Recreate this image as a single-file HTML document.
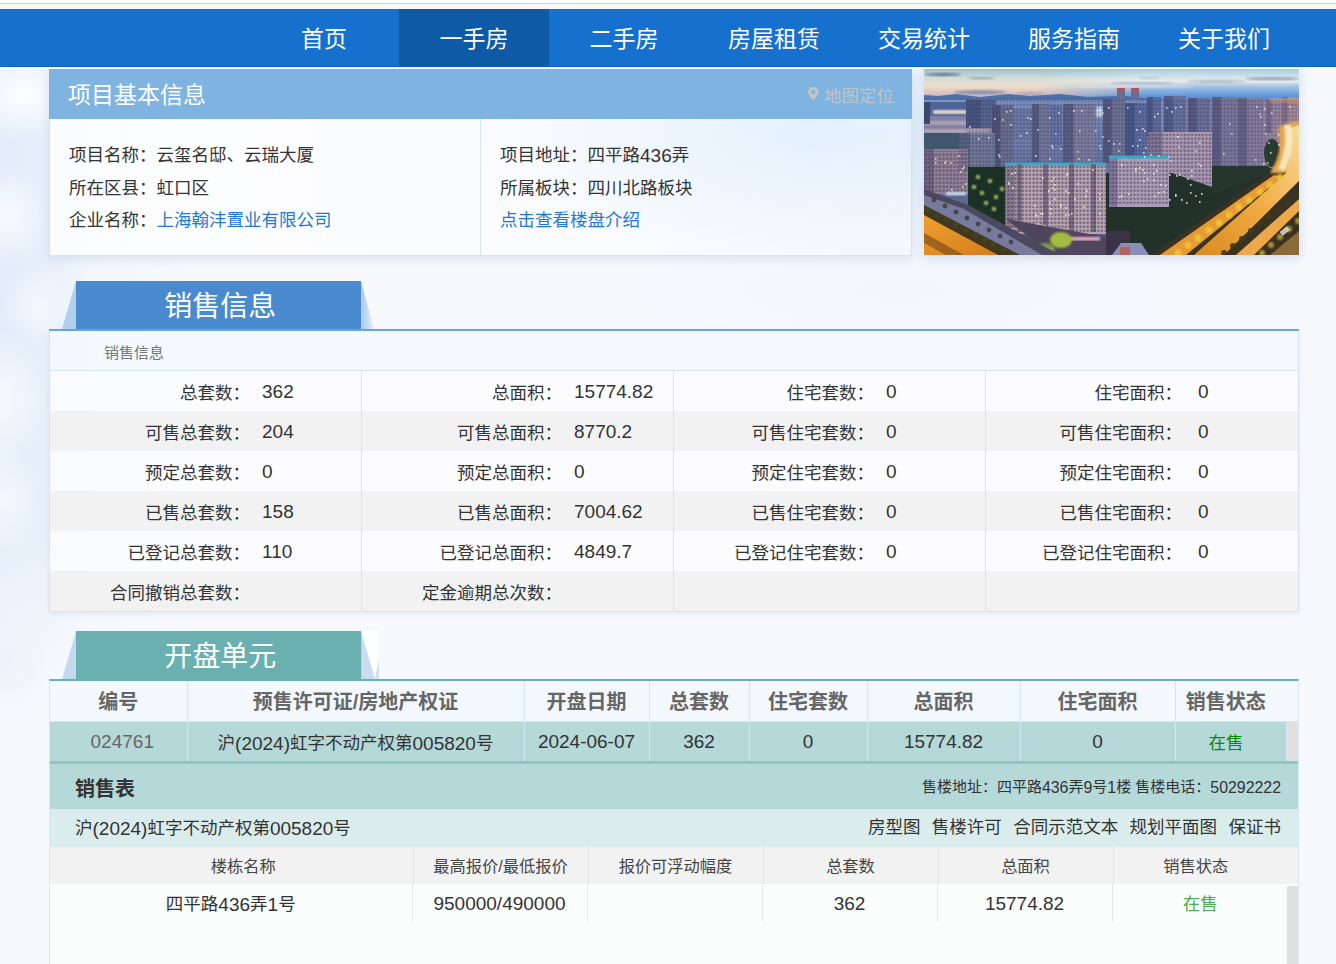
<!DOCTYPE html>
<html lang="zh-CN">
<head>
<meta charset="utf-8">
<title>项目基本信息</title>
<style>
*{box-sizing:border-box;margin:0;padding:0}
html,body{width:1336px;height:964px;overflow:hidden}
body{position:relative;font-family:"Liberation Sans","Noto Sans CJK SC",sans-serif;color:#333;font-size:17.5px;
background:#f7f9fd;}
a{text-decoration:none;color:inherit}
#bg{position:absolute;left:0;top:0;width:1336px;height:964px;z-index:0;
background:
 radial-gradient(ellipse 60px 45px at 22px 95px,rgba(255,255,255,.95),rgba(255,255,255,0) 100%),
 radial-gradient(ellipse 45px 60px at 5px 660px,rgba(236,242,250,.9),rgba(236,242,250,0) 100%),
 radial-gradient(ellipse 50px 70px at 0px 400px,rgba(248,251,254,.9),rgba(248,251,254,0) 100%),
 radial-gradient(ellipse 330px 120px at 800px 135px,rgba(219,236,251,1),rgba(219,236,251,0) 100%),
 radial-gradient(ellipse 260px 60px at 900px 290px,rgba(238,245,252,.7),rgba(238,245,252,0) 100%),
 linear-gradient(180deg,rgba(247,249,253,0) 0,rgba(247,249,253,0) 520px,rgba(247,249,253,1) 700px),
 radial-gradient(ellipse 40px 50px at 8px 215px,rgba(250,252,255,.9),rgba(250,252,255,0) 100%),
 radial-gradient(ellipse 35px 40px at 38px 305px,rgba(247,250,254,.8),rgba(247,250,254,0) 100%),
 radial-gradient(ellipse 40px 60px at 4px 500px,rgba(247,250,254,.8),rgba(247,250,254,0) 100%),
 linear-gradient(90deg,#e2edf9 0,#e5effa 40px,rgba(240,246,252,.7) 90px,rgba(247,249,253,0) 190px),
 #f7f9fd;}
#topstrip{position:absolute;left:0;top:0;width:1336px;height:9px;background:#f8f8f8;border-top:3px solid #fff;z-index:2}
#topstrip i{position:absolute;left:0;top:0;width:100%;height:1px;background:#cfcfcf}
#nav{position:absolute;left:0;top:9px;width:1336px;height:58px;background:#1670cd;border-bottom:1px solid #0a64c2;z-index:2}
#navline{position:absolute;left:0;top:67px;width:1336px;height:2px;background:#fdfeff;z-index:2}
#nav ul{position:absolute;left:249px;top:0;list-style:none;height:57px}
#nav li{float:left;width:150px;height:57px;line-height:61px;text-align:center;color:#fff;font-size:23px}
#nav li.on{background:#0f5aa6}
.abs{position:absolute;z-index:1}

#info{left:49px;top:69px;width:863px;height:187px;box-shadow:0 3px 10px rgba(120,150,190,.22)}
#info .hd{height:50px;background:#7fb3e0;color:#fff;font-size:23px;line-height:53px;padding-left:19px;position:relative}
#info .hd .map{position:absolute;right:18px;top:0;font-size:17.5px;color:#c3c3c3;line-height:54px}
#info .hd .map svg{position:absolute;left:-16px;top:17.5px}
#info .bd{height:137px;border:1px solid #d3e6f6;border-top:0;background:linear-gradient(90deg,rgba(255,255,255,.75) 0,rgba(255,255,255,.55) 45%,rgba(240,247,254,.25) 100%);position:relative}
#info .bd .c1,#info .bd .c2{position:absolute;top:0;height:136px;padding-top:20px;line-height:32.5px;font-size:17.5px;white-space:nowrap}
#info .bd .c1{left:0;width:431px;padding-left:19px;border-right:1px solid #d3e6f6}
#info .bd .c2{left:431px;padding-left:19px}
#info a{color:#1e7ad2}

.tab{position:absolute;z-index:1;left:62px;width:312px;height:48px}
.tab b{position:absolute;left:14px;top:0;width:284.5px;height:48px;line-height:51px;text-align:center;color:#fff;font-size:28px;font-weight:normal;padding-left:4px}
.tab svg{position:absolute;left:0;top:0}
#tab1{top:281px}
#tab1 b{background:#4a8bd0}
#tab2{top:631px;width:318px}
#tab2 b{background:#6ab0b1}
#sales{left:49px;top:329px;width:1250px;height:283px;border-top:2px solid #68a6da;box-shadow:0 2px 6px rgba(140,160,190,.15)}
#sales .sub{height:40px;line-height:43px;padding-left:54px;font-size:15px;color:#777;background:rgba(243,248,253,.9);border:1px solid #d3e6f6;border-top:0}
#sales table{border-collapse:separate;border-spacing:0;table-layout:fixed;width:1250px;position:relative}
#sales td{height:40px;font-size:17.5px;vertical-align:middle;white-space:nowrap;padding:0}
#sales tr:nth-child(odd) td{background:rgba(252,253,255,.8)}
#sales tr:nth-child(even) td{background:#f2f2f2}
#sales td.l{text-align:right}
#sales td.l4{padding-right:4px}
#sales td.v{text-align:left;padding-left:12px;border-right:1px solid #d3e6f6}
#sales td.v.last{border-right:0}
#sales .frame{position:absolute;left:0;top:40px;width:1250px;height:241px;border:1px solid #d3e6f6;border-top:0;pointer-events:none}

#units{left:49px;top:679px;width:1250px;height:285px;border-top:2px solid #6ab0b1;border-left:1px solid #d3e6f6;border-right:1px solid #d3e6f6;background:rgba(251,253,253,.9);overflow:hidden}
#units table{border-collapse:collapse;table-layout:fixed}
#t1{width:1248px}
#t1 th{height:40px;font-size:20px;font-weight:bold;color:#666;background:#f3f8fd;border-right:1px solid #d3e6f6;border-bottom:1px solid #d3e6f6;padding:0;text-align:center}
#t1 th:last-child{border-right:0}
#t1 td{height:40px;font-size:17.5px;background:#b5d8d9;border-right:1px solid #d3e6f6;padding:0;text-align:center}
#t1 td.no{color:#666;padding-left:8px}
#t1 td.g{color:#0a8a0a}
#t1 td.sb{background:#e0e0e0;border-right:0}
#units .ln{height:3px;background:#8ec5c6}
#units .r1{height:45px;background:#b5d8d9;position:relative;line-height:45px}
#units .r1 b{position:absolute;left:25px;top:3px;font-size:20px;color:#333}
#units .r1>span{position:absolute;right:17px;font-size:15px;color:#333}
#units .r2{height:37.5px;background:#dbecec;position:relative;line-height:37px;font-size:17.5px}
#units .r2 i{position:absolute;left:25px;font-style:normal}
#units .r2>span{position:absolute;right:17px;word-spacing:0}
#units .r2>span a{margin-left:11.4px}
#t2{width:1248px}
#t2 th{height:37.5px;font-size:16.25px;font-weight:normal;color:#444;background:#f2f2f2;border-right:1px solid #e2e2e2;padding:0;text-align:center}
#t2 th:last-child{border-right:0}
#t3{width:1238px}
#t3 td{height:37.5px;font-size:17.5px;border-right:1px solid #e6e6e6;padding:0;text-align:center}
#t3 td:last-child{border-right:0}
#t3 td.g{color:#4caf50}
#units .vs{position:absolute;right:0;top:205px;width:11px;height:80px;background:#e0e0e0}
.d{font-size:19px;position:relative;top:1px}
.r1 .d{font-size:15.9px;top:0.5px}
#t1 th.st{padding-right:22px}
#t1 td.g{padding-right:9px}
#t2 th.st{padding-right:20px}
#t2 th.nm{padding-left:24px}
#photo{box-shadow:0 3px 12px rgba(110,140,185,.28)}
</style>
</head>
<body>
<div id="bg"></div>
<div id="topstrip"><i></i></div>
<div id="nav">
 <ul>
  <li>首页</li><li class="on">一手房</li><li>二手房</li><li>房屋租赁</li><li>交易统计</li><li>服务指南</li><li>关于我们</li>
 </ul>
</div>
<div id="navline"></div>

<div id="info" class="abs">
 <div class="hd">项目基本信息<span class="map"><svg width="10.5" height="13.5" viewBox="0 0 11 14"><path d="M5.5 0C2.5 0 0 2.4 0 5.3c0 1.2.5 2.4 1.200 3.400L5.500 14l4.300-5.300c.7-1 1.200-2.200 1.200-3.400C11 2.400 8.500 0 5.500 0zm0 7.400a2.100 2.100 0 1 1 0-4.200 2.100 2.100 0 0 1 0 4.200z" fill="#c3c3c3"/></svg>地图定位</span></div>
 <div class="bd">
  <div class="c1"><p>项目名称：云玺名邸、云瑞大厦</p><p>所在区县：虹口区</p><p>企业名称：<a>上海翰沣置业有限公司</a></p></div>
  <div class="c2"><p>项目地址：四平路<span class="d">436</span>弄</p><p>所属板块：四川北路板块</p><p><a>点击查看楼盘介绍</a></p></div>
 </div>
</div>

<!-- PHOTO-START -->
<svg id="photo" class="abs" width="375" height="186" viewBox="0 0 375 186" style="left:924px;top:69px">
<defs>
<linearGradient id="skyL" x1="0" y1="0" x2="0" y2="1"><stop offset="0" stop-color="#93b7c6"/><stop offset=".28" stop-color="#cfdcd9"/><stop offset=".5" stop-color="#eee0cd"/><stop offset=".7" stop-color="#d9c0bd"/><stop offset=".86" stop-color="#a9a6c8"/><stop offset="1" stop-color="#7f9fd4"/></linearGradient>
<linearGradient id="skyR" x1="0" y1="0" x2="0" y2="1"><stop offset="0" stop-color="#98c6dc"/><stop offset=".22" stop-color="#c9dfe8"/><stop offset=".38" stop-color="#ebebe8"/><stop offset=".5" stop-color="#a9c5e5"/><stop offset=".78" stop-color="#5b93d9"/><stop offset="1" stop-color="#5b93d9"/></linearGradient>
<linearGradient id="fadeR" x1="0" y1="0" x2="1" y2="0"><stop offset=".3" stop-color="#fff" stop-opacity="0"/><stop offset=".6" stop-color="#fff" stop-opacity="1"/></linearGradient>
<mask id="mR"><rect width="375" height="40" fill="url(#fadeR)"/></mask>
<linearGradient id="city" x1="0" y1="0" x2="0" y2="1"><stop offset="0" stop-color="#7f93c4"/><stop offset=".5" stop-color="#66709c"/><stop offset="1" stop-color="#4c5274"/></linearGradient>
<linearGradient id="warm" x1="0" y1="0" x2="1" y2="0"><stop offset=".55" stop-color="#b08aa0" stop-opacity="0"/><stop offset="1" stop-color="#c08a90" stop-opacity=".55"/></linearGradient>
<linearGradient id="road" x1="0" y1="1" x2="1" y2="0"><stop offset="0" stop-color="#d98a22"/><stop offset=".5" stop-color="#f0ab42"/><stop offset="1" stop-color="#f8dca0"/></linearGradient>
<linearGradient id="roadL" x1="0" y1="0" x2="1" y2="1"><stop offset="0" stop-color="#f0a030"/><stop offset="1" stop-color="#d47c1c"/></linearGradient>
<pattern id="pw1" width="3.4" height="3.8" patternUnits="userSpaceOnUse"><rect x=".4" y=".5" width="2" height="2.200" fill="#2d3356"/></pattern>
<pattern id="pw2" width="3.6" height="4" patternUnits="userSpaceOnUse"><rect x=".5" y=".6" width="2.200" height="2.300" fill="#443650"/></pattern>
<filter id="b1" x="-10%" y="-10%" width="120%" height="120%"><feGaussianBlur stdDeviation="0.8"/></filter>
<filter id="b2" x="-20%" y="-20%" width="140%" height="140%"><feGaussianBlur stdDeviation="2.500"/></filter>
<filter id="b0" x="0" y="0" width="100%" height="100%"><feGaussianBlur stdDeviation="0.45"/></filter>
<clipPath id="cp"><rect width="375" height="186"/></clipPath>
</defs>
<g clip-path="url(#cp)"><g filter="url(#b0)">
<rect x="-2" y="-2" width="379" height="38" fill="url(#skyL)"/>
<rect x="-2" y="-2" width="379" height="38" fill="url(#skyR)" mask="url(#mR)"/>
<ellipse cx="19.0" cy="5.5" rx="18.0" ry="1.5" fill="#4f5f6c" opacity="0.8" filter="url(#b1)"/>
<ellipse cx="57.0" cy="9.1" rx="13.0" ry="1.1" fill="#74828e" opacity="0.6" filter="url(#b1)"/>
<ellipse cx="56.0" cy="23.25" rx="26.0" ry="2.25" fill="#6f7fa6" opacity="0.7" filter="url(#b1)"/>
<ellipse cx="106.0" cy="24.5" rx="14.0" ry="1.5" fill="#8f98b8" opacity="0.6" filter="url(#b1)"/>
<ellipse cx="218.0" cy="14.25" rx="32.0" ry="1.25" fill="#93a9bf" opacity="0.6" filter="url(#b1)"/>
<ellipse cx="292.0" cy="12.5" rx="30.0" ry="1.5" fill="#889fb7" opacity="0.6" filter="url(#b1)"/>
<ellipse cx="348.5" cy="9.75" rx="26.5" ry="1.75" fill="#7890a8" opacity="0.7" filter="url(#b1)"/>
<ellipse cx="225.0" cy="9.0" rx="11.0" ry="1.0" fill="#a3b7c8" opacity="0.6" filter="url(#b1)"/>
<ellipse cx="210.0" cy="17.5" rx="60.0" ry="1.5" fill="#f3efe8" opacity="0.5" filter="url(#b1)"/>
<path d="M0 26l14 1 18-2 24 3 28-3 22 2 30-2 28 3 36-1 30 3 20 0v10H0z" fill="#4467a2" opacity=".9"/>
<rect x="0" y="31" width="375" height="155" fill="url(#city)"/>
<rect x="0" y="31" width="375" height="70" fill="url(#warm)"/>
<rect x="0" y="33" width="70" height="14" fill="#4d6496"/>
<rect x="9" y="41" width="34" height="4" fill="#f2e6d2" opacity=".9" filter="url(#b1)"/>
<rect x="0" y="47" width="135" height="16" fill="#7f7ea4" opacity=".8"/>
<rect x="0" y="52" width="120" height="4" fill="#d8bfc0" opacity=".55" filter="url(#b1)"/>
<rect x="0" y="60" width="66" height="4" fill="#d9c3ae" opacity=".6" filter="url(#b1)"/>
<rect x="0" y="64" width="75" height="24" fill="#3f566e"/>
<rect x="0" y="33" width="6" height="22" fill="#3e4868"/>
<rect x="42" y="31" width="30" height="28" fill="#58648e"/>
<rect x="42" y="31" width="15.0" height="28" fill="#485480"/>
<rect x="88" y="40" width="20" height="30" fill="#6d7aa6"/>
<rect x="126" y="36" width="12" height="40" fill="#6473a4"/>
<rect x="68" y="36" width="21" height="71" fill="#6c6e90"/>
<rect x="68" y="36" width="8.4" height="71" fill="#4f5376"/>
<rect x="108" y="35" width="18" height="58" fill="#74779a"/>
<rect x="108" y="35" width="7.2" height="58" fill="#585c80"/>
<rect x="139" y="35" width="33" height="64" fill="#7c7d9e"/>
<rect x="139" y="35" width="10.6" height="64" fill="#5a5e84"/>
<rect x="172" y="38" width="7" height="10" fill="#dfe9f8" opacity=".85" filter="url(#b1)"/>
<rect x="179" y="30" width="22" height="64" fill="#6f7294"/>
<rect x="179" y="30" width="8.8" height="64" fill="#55597c"/>
<rect x="193" y="20" width="8" height="11" fill="#6a6d92"/>
<rect x="193" y="19" width="8" height="2.600" fill="#c4505c"/>
<rect x="207" y="20" width="8" height="11" fill="#6a6d92"/>
<rect x="207" y="19" width="8" height="2.600" fill="#c4505c"/>
<rect x="201" y="34" width="22" height="55" fill="#5b6ca0"/>
<rect x="201" y="34" width="9.9" height="55" fill="#485888"/>
<rect x="223" y="28" width="14" height="40" fill="#5f6c9c"/>
<rect x="223" y="28" width="5.6" height="40" fill="#4c5886"/>
<rect x="240" y="27" width="22" height="40" fill="#67709c"/>
<rect x="240" y="27" width="8.8" height="40" fill="#525c88"/>
<rect x="264" y="29" width="22" height="40" fill="#6d6f98"/>
<rect x="264" y="29" width="8.8" height="40" fill="#585a84"/>
<rect x="288" y="28" width="26" height="69" fill="#7b769b"/>
<rect x="288" y="28" width="9.1" height="69" fill="#5f5c84"/>
<rect x="314" y="29" width="26" height="68" fill="#857c9e"/>
<rect x="314" y="29" width="9.1" height="68" fill="#686286"/>
<rect x="342" y="30" width="16" height="34" fill="#98849e"/>
<rect x="342" y="30" width="5.6" height="34" fill="#786a8c"/>
<rect x="358" y="28" width="17" height="30" fill="#a88a98"/>
<rect x="358" y="28" width="5.9" height="30" fill="#86708a"/>
<rect x="345" y="30" width="30" height="3" fill="#e6a07c" opacity=".8" filter="url(#b1)"/>
<path d="M352 62q8-8 23-10v60q-12-4-20 0q6-20-3-50z" fill="#e8b070" opacity=".7" filter="url(#b2)"/>
<rect x="42" y="30" width="333" height="68" fill="url(#pw1)" opacity=".4"/>
<rect x="35" y="64" width="36" height="39" fill="#727896"/>
<rect x="35" y="64" width="10.8" height="39" fill="#5a6182"/>
<rect x="224" y="63" width="64" height="58" fill="#a797b1"/>
<rect x="224" y="63" width="14.1" height="58" fill="#7f7496"/>
<rect x="0" y="80" width="44" height="45" fill="#907f97"/>
<rect x="0" y="80" width="9.7" height="45" fill="#6e6282"/>
<rect x="35" y="66" width="36" height="36" fill="url(#pw1)" opacity=".45"/>
<rect x="224" y="65" width="64" height="55" fill="url(#pw2)" opacity=".5"/>
<rect x="0" y="82" width="44" height="42" fill="url(#pw2)" opacity=".5"/>
<path d="M44 98h40v62l-40-24z" fill="#1f3026"/>
<path d="M182 104h66l40 14 56-20 12 4-56 58-66 26H182z" fill="#22322a"/>
<path d="M288 97h56v8l-56 20z" fill="#26362e"/>
<ellipse cx="348" cy="84" rx="8" ry="14" fill="#2a3a30"/>
<g opacity=".8"><circle cx="328" cy="142" r="1.600" fill="#31452f"/><circle cx="283" cy="168" r="1.600" fill="#3a5236"/><circle cx="268" cy="175" r="1.600" fill="#3a5236"/><circle cx="286" cy="155" r="1.600" fill="#3a5236"/><circle cx="316" cy="146" r="1.600" fill="#4a5a3a"/><circle cx="340" cy="184" r="1.600" fill="#3a5236"/><circle cx="245" cy="181" r="1.600" fill="#3a5236"/><circle cx="249" cy="178" r="1.600" fill="#31452f"/><circle cx="322" cy="122" r="1.600" fill="#16241c"/><circle cx="339" cy="153" r="1.600" fill="#3a5236"/><circle cx="280" cy="171" r="1.600" fill="#16241c"/><circle cx="255" cy="181" r="1.600" fill="#16241c"/><circle cx="280" cy="163" r="1.600" fill="#31452f"/><circle cx="300" cy="179" r="1.600" fill="#31452f"/><circle cx="250" cy="177" r="1.600" fill="#16241c"/><circle cx="317" cy="154" r="1.600" fill="#4a5a3a"/><circle cx="267" cy="182" r="1.600" fill="#3a5236"/><circle cx="337" cy="157" r="1.600" fill="#31452f"/><circle cx="276" cy="178" r="1.600" fill="#16241c"/><circle cx="326" cy="161" r="1.600" fill="#3a5236"/><circle cx="299" cy="176" r="1.600" fill="#31452f"/><circle cx="308" cy="177" r="1.600" fill="#4a5a3a"/><circle cx="324" cy="135" r="1.600" fill="#31452f"/><circle cx="323" cy="132" r="1.600" fill="#4a5a3a"/><circle cx="310" cy="177" r="1.600" fill="#31452f"/><circle cx="262" cy="171" r="1.600" fill="#3a5236"/><circle cx="295" cy="180" r="1.600" fill="#4a5a3a"/><circle cx="258" cy="178" r="1.600" fill="#16241c"/><circle cx="289" cy="162" r="1.600" fill="#16241c"/><circle cx="306" cy="168" r="1.600" fill="#3a5236"/><circle cx="287" cy="169" r="1.600" fill="#3a5236"/><circle cx="293" cy="147" r="1.600" fill="#31452f"/><circle cx="330" cy="162" r="1.600" fill="#31452f"/><circle cx="263" cy="170" r="1.600" fill="#4a5a3a"/></g>
<rect x="81" y="95" width="101" height="70" fill="#b5a2b2"/>
<rect x="81" y="95" width="10.1" height="70" fill="#8a7a92"/>
<rect x="81" y="93.5" width="101" height="3.200" fill="#3aa6c6"/>
<rect x="93" y="95" width="5" height="68" fill="#6a5c74" opacity=".75"/>
<rect x="119" y="95" width="5" height="68" fill="#6a5c74" opacity=".75"/>
<rect x="145" y="95" width="5" height="68" fill="#6a5c74" opacity=".75"/>
<rect x="167" y="95" width="5" height="68" fill="#6a5c74" opacity=".75"/>
<rect x="81" y="97" width="101" height="66" fill="url(#pw2)" opacity=".55"/>
<rect x="185" y="88" width="60" height="50" fill="#ab9db5"/>
<rect x="185" y="88" width="8.4" height="50" fill="#82769a"/>
<rect x="185" y="86.5" width="60" height="3.200" fill="#3aa6c6"/>
<rect x="185" y="91" width="60" height="45" fill="url(#pw2)" opacity=".5"/>
<g opacity=".85"><rect x="195" y="74" width="1.600" height="1.800" fill="#c9d4ee"/><rect x="75" y="87" width="1.600" height="1.800" fill="#dfe6f6"/><rect x="347" y="43" width="1.600" height="1.800" fill="#c9d4ee"/><rect x="339" y="94" width="1.600" height="1.800" fill="#e8e0d0"/><rect x="219" y="83" width="1.600" height="1.800" fill="#e8e0d0"/><rect x="128" y="78" width="1.600" height="1.800" fill="#c9d4ee"/><rect x="157" y="41" width="1.600" height="1.800" fill="#e8e0d0"/><rect x="155" y="61" width="1.600" height="1.800" fill="#e8e0d0"/><rect x="203" y="38" width="1.600" height="1.800" fill="#c9d4ee"/><rect x="184" y="38" width="1.600" height="1.800" fill="#dfe6f6"/><rect x="153" y="82" width="1.600" height="1.800" fill="#c9d4ee"/><rect x="197" y="95" width="1.600" height="1.800" fill="#dfe6f6"/><rect x="213" y="76" width="1.600" height="1.800" fill="#e8e0d0"/><rect x="354" y="65" width="1.600" height="1.800" fill="#dfe6f6"/><rect x="70" y="49" width="1.600" height="1.800" fill="#dfe6f6"/><rect x="226" y="85" width="1.600" height="1.800" fill="#dfe6f6"/><rect x="253" y="67" width="1.600" height="1.800" fill="#dfe6f6"/><rect x="127" y="76" width="1.600" height="1.800" fill="#dfe6f6"/><rect x="111" y="86" width="1.600" height="1.800" fill="#dfe6f6"/><rect x="215" y="70" width="1.600" height="1.800" fill="#c9d4ee"/><rect x="178" y="43" width="1.600" height="1.800" fill="#c9d4ee"/><rect x="242" y="38" width="1.600" height="1.800" fill="#c9d4ee"/><rect x="212" y="60" width="1.600" height="1.800" fill="#dfe6f6"/><rect x="82" y="42" width="1.600" height="1.800" fill="#c9d4ee"/><rect x="64" y="68" width="1.600" height="1.800" fill="#e8e0d0"/><rect x="346" y="83" width="1.600" height="1.800" fill="#e8e0d0"/><rect x="131" y="64" width="1.600" height="1.800" fill="#c9d4ee"/><rect x="154" y="89" width="1.600" height="1.800" fill="#e8e0d0"/><rect x="215" y="42" width="1.600" height="1.800" fill="#e8e0d0"/><rect x="246" y="91" width="1.600" height="1.800" fill="#c9d4ee"/><rect x="274" y="94" width="1.600" height="1.800" fill="#c9d4ee"/><rect x="106" y="49" width="1.600" height="1.800" fill="#dfe6f6"/><rect x="136" y="79" width="1.600" height="1.800" fill="#c9d4ee"/><rect x="247" y="42" width="1.600" height="1.800" fill="#dfe6f6"/><rect x="234" y="86" width="1.600" height="1.800" fill="#dfe6f6"/><rect x="125" y="48" width="1.600" height="1.800" fill="#dfe6f6"/><rect x="332" y="37" width="1.600" height="1.800" fill="#dfe6f6"/><rect x="178" y="67" width="1.600" height="1.800" fill="#c9d4ee"/><rect x="220" y="87" width="1.600" height="1.800" fill="#dfe6f6"/><rect x="253" y="67" width="1.600" height="1.800" fill="#dfe6f6"/><rect x="244" y="87" width="1.600" height="1.800" fill="#c9d4ee"/><rect x="344" y="73" width="1.600" height="1.800" fill="#e8e0d0"/><rect x="340" y="55" width="1.600" height="1.800" fill="#e8e0d0"/><rect x="336" y="47" width="1.600" height="1.800" fill="#c9d4ee"/><rect x="335" y="44" width="1.600" height="1.800" fill="#c9d4ee"/><rect x="86" y="41" width="1.600" height="1.800" fill="#e8e0d0"/><rect x="74" y="85" width="1.600" height="1.800" fill="#e8e0d0"/><rect x="221" y="78" width="1.600" height="1.800" fill="#c9d4ee"/><rect x="175" y="76" width="1.600" height="1.800" fill="#c9d4ee"/><rect x="74" y="70" width="1.600" height="1.800" fill="#e8e0d0"/><rect x="343" y="93" width="1.600" height="1.800" fill="#c9d4ee"/><rect x="275" y="73" width="1.600" height="1.800" fill="#e8e0d0"/><rect x="208" y="76" width="1.600" height="1.800" fill="#c9d4ee"/><rect x="307" y="64" width="1.600" height="1.800" fill="#c9d4ee"/><rect x="54" y="69" width="1.600" height="1.800" fill="#dfe6f6"/><rect x="341" y="64" width="1.600" height="1.800" fill="#c9d4ee"/><rect x="103" y="48" width="1.600" height="1.800" fill="#c9d4ee"/><rect x="369" y="91" width="1.600" height="1.800" fill="#c9d4ee"/><rect x="233" y="44" width="1.600" height="1.800" fill="#dfe6f6"/><rect x="194" y="81" width="1.600" height="1.800" fill="#e8e0d0"/><rect x="171" y="61" width="1.600" height="1.800" fill="#e8e0d0"/><rect x="184" y="71" width="1.600" height="1.800" fill="#c9d4ee"/><rect x="251" y="38" width="1.600" height="1.800" fill="#c9d4ee"/><rect x="102" y="63" width="1.600" height="1.800" fill="#dfe6f6"/><rect x="164" y="90" width="1.600" height="1.800" fill="#dfe6f6"/><rect x="96" y="66" width="1.600" height="1.800" fill="#c9d4ee"/><rect x="149" y="41" width="1.600" height="1.800" fill="#dfe6f6"/><rect x="331" y="90" width="1.600" height="1.800" fill="#e8e0d0"/><rect x="230" y="47" width="1.600" height="1.800" fill="#dfe6f6"/><rect x="366" y="83" width="1.600" height="1.800" fill="#e8e0d0"/><rect x="134" y="43" width="1.600" height="1.800" fill="#dfe6f6"/><rect x="299" y="84" width="1.600" height="1.800" fill="#e8e0d0"/><rect x="86" y="55" width="1.600" height="1.800" fill="#dfe6f6"/><rect x="271" y="81" width="1.600" height="1.800" fill="#c9d4ee"/><rect x="176" y="79" width="1.600" height="1.800" fill="#c9d4ee"/><rect x="305" y="54" width="1.600" height="1.800" fill="#c9d4ee"/><rect x="45" y="57" width="1.600" height="1.800" fill="#dfe6f6"/><rect x="340" y="39" width="1.600" height="1.800" fill="#e8e0d0"/><rect x="354" y="75" width="1.600" height="1.800" fill="#e8e0d0"/><rect x="113" y="60" width="1.600" height="1.800" fill="#c9d4ee"/><rect x="218" y="59" width="1.600" height="1.800" fill="#e8e0d0"/><rect x="254" y="77" width="1.600" height="1.800" fill="#e8e0d0"/><rect x="365" y="37" width="1.600" height="1.800" fill="#dfe6f6"/><rect x="78" y="50" width="1.600" height="1.800" fill="#e8e0d0"/><rect x="175" y="39" width="1.600" height="1.800" fill="#c9d4ee"/><rect x="256" y="37" width="1.600" height="1.800" fill="#e8e0d0"/><rect x="125" y="89" width="1.600" height="1.800" fill="#dfe6f6"/><rect x="220" y="61" width="1.600" height="1.800" fill="#dfe6f6"/><rect x="229" y="95" width="1.600" height="1.800" fill="#dfe6f6"/><rect x="189" y="74" width="1.600" height="1.800" fill="#dfe6f6"/><rect x="141" y="145" width="1.600" height="1.800" fill="#f3e6cf"/><rect x="120" y="156" width="1.600" height="1.800" fill="#f6ecd8"/><rect x="129" y="108" width="1.600" height="1.800" fill="#f6ecd8"/><rect x="136" y="135" width="1.600" height="1.800" fill="#f6ecd8"/><rect x="175" y="124" width="1.600" height="1.800" fill="#f6ecd8"/><rect x="141" y="121" width="1.600" height="1.800" fill="#f6ecd8"/><rect x="130" y="115" width="1.600" height="1.800" fill="#f6ecd8"/><rect x="147" y="144" width="1.600" height="1.800" fill="#f3e6cf"/><rect x="84" y="113" width="1.600" height="1.800" fill="#f3e6cf"/><rect x="144" y="123" width="1.600" height="1.800" fill="#f6ecd8"/><rect x="88" y="118" width="1.600" height="1.800" fill="#f6ecd8"/><rect x="88" y="159" width="1.600" height="1.800" fill="#f6ecd8"/><rect x="90" y="154" width="1.600" height="1.800" fill="#f6ecd8"/><rect x="153" y="114" width="1.600" height="1.800" fill="#f3e6cf"/><rect x="87" y="104" width="1.600" height="1.800" fill="#f6ecd8"/><rect x="97" y="158" width="1.600" height="1.800" fill="#f3e6cf"/><rect x="142" y="105" width="1.600" height="1.800" fill="#f6ecd8"/><rect x="127" y="111" width="1.600" height="1.800" fill="#f3e6cf"/><rect x="118" y="108" width="1.600" height="1.800" fill="#f6ecd8"/><rect x="126" y="139" width="1.600" height="1.800" fill="#f6ecd8"/><rect x="141" y="138" width="1.600" height="1.800" fill="#f6ecd8"/><rect x="118" y="144" width="1.600" height="1.800" fill="#f3e6cf"/><rect x="175" y="144" width="1.600" height="1.800" fill="#f3e6cf"/><rect x="130" y="129" width="1.600" height="1.800" fill="#f6ecd8"/><rect x="159" y="137" width="1.600" height="1.800" fill="#f6ecd8"/><rect x="110" y="136" width="1.600" height="1.800" fill="#f3e6cf"/><rect x="144" y="145" width="1.600" height="1.800" fill="#f3e6cf"/><rect x="175" y="129" width="1.600" height="1.800" fill="#f3e6cf"/><rect x="168" y="100" width="1.600" height="1.800" fill="#f3e6cf"/><rect x="84" y="114" width="1.600" height="1.800" fill="#f3e6cf"/><rect x="143" y="104" width="1.600" height="1.800" fill="#f6ecd8"/><rect x="90" y="103" width="1.600" height="1.800" fill="#f3e6cf"/><rect x="136" y="137" width="1.600" height="1.800" fill="#f6ecd8"/><rect x="130" y="120" width="1.600" height="1.800" fill="#f6ecd8"/><rect x="116" y="144" width="1.600" height="1.800" fill="#f3e6cf"/><rect x="161" y="126" width="1.600" height="1.800" fill="#f3e6cf"/><rect x="126" y="144" width="1.600" height="1.800" fill="#f6ecd8"/><rect x="162" y="121" width="1.600" height="1.800" fill="#f6ecd8"/><rect x="111" y="145" width="1.600" height="1.800" fill="#f3e6cf"/><rect x="124" y="121" width="1.600" height="1.800" fill="#f3e6cf"/><rect x="128" y="118" width="1.600" height="1.800" fill="#f3e6cf"/><rect x="125" y="133" width="1.600" height="1.800" fill="#f6ecd8"/><rect x="112" y="146" width="1.600" height="1.800" fill="#f3e6cf"/><rect x="113" y="154" width="1.600" height="1.800" fill="#f3e6cf"/><rect x="150" y="129" width="1.600" height="1.800" fill="#f6ecd8"/><rect x="215" y="98" width="1.600" height="1.800" fill="#f1e6d2"/><rect x="252" y="106" width="1.600" height="1.800" fill="#f1e6d2"/><rect x="219" y="111" width="1.600" height="1.800" fill="#f1e6d2"/><rect x="230" y="126" width="1.600" height="1.800" fill="#f1e6d2"/><rect x="232" y="101" width="1.600" height="1.800" fill="#f1e6d2"/><rect x="195" y="127" width="1.600" height="1.800" fill="#f1e6d2"/><rect x="223" y="109" width="1.600" height="1.800" fill="#f1e6d2"/><rect x="266" y="123" width="1.600" height="1.800" fill="#f1e6d2"/><rect x="266" y="115" width="1.600" height="1.800" fill="#f1e6d2"/><rect x="204" y="124" width="1.600" height="1.800" fill="#f1e6d2"/><rect x="267" y="101" width="1.600" height="1.800" fill="#f1e6d2"/><rect x="241" y="116" width="1.600" height="1.800" fill="#f1e6d2"/><rect x="251" y="126" width="1.600" height="1.800" fill="#f1e6d2"/><rect x="245" y="105" width="1.600" height="1.800" fill="#f1e6d2"/><rect x="220" y="103" width="1.600" height="1.800" fill="#f1e6d2"/><rect x="276" y="96" width="1.600" height="1.800" fill="#f1e6d2"/><rect x="197" y="126" width="1.600" height="1.800" fill="#f1e6d2"/><rect x="211" y="101" width="1.600" height="1.800" fill="#f1e6d2"/><rect x="263" y="109" width="1.600" height="1.800" fill="#f1e6d2"/><rect x="267" y="106" width="1.600" height="1.800" fill="#f1e6d2"/><rect x="236" y="115" width="1.600" height="1.800" fill="#f1e6d2"/><rect x="257" y="130" width="1.600" height="1.800" fill="#f1e6d2"/><rect x="262" y="133" width="1.600" height="1.800" fill="#f1e6d2"/><rect x="271" y="126" width="1.600" height="1.800" fill="#f1e6d2"/><rect x="275" y="132" width="1.600" height="1.800" fill="#f1e6d2"/><rect x="239" y="122" width="1.600" height="1.800" fill="#f1e6d2"/><rect x="229" y="110" width="1.600" height="1.800" fill="#f1e6d2"/><rect x="211" y="99" width="1.600" height="1.800" fill="#f1e6d2"/><rect x="255" y="105" width="1.600" height="1.800" fill="#f1e6d2"/><rect x="229" y="104" width="1.600" height="1.800" fill="#f1e6d2"/><rect x="234" y="123" width="1.600" height="1.800" fill="#f1e6d2"/><rect x="251" y="125" width="1.600" height="1.800" fill="#f1e6d2"/><rect x="277" y="124" width="1.600" height="1.800" fill="#f1e6d2"/><rect x="245" y="130" width="1.600" height="1.800" fill="#f1e6d2"/><rect x="218" y="100" width="1.600" height="1.800" fill="#f1e6d2"/><rect x="11" y="93" width="1.600" height="1.800" fill="#e9ddd0"/><rect x="26" y="93" width="1.600" height="1.800" fill="#e9ddd0"/><rect x="38" y="99" width="1.600" height="1.800" fill="#e9ddd0"/><rect x="27" y="120" width="1.600" height="1.800" fill="#e9ddd0"/><rect x="36" y="102" width="1.600" height="1.800" fill="#e9ddd0"/><rect x="39" y="97" width="1.600" height="1.800" fill="#e9ddd0"/><rect x="21" y="92" width="1.600" height="1.800" fill="#e9ddd0"/><rect x="11" y="89" width="1.600" height="1.800" fill="#e9ddd0"/><rect x="41" y="114" width="1.600" height="1.800" fill="#e9ddd0"/><rect x="34" y="86" width="1.600" height="1.800" fill="#e9ddd0"/><rect x="38" y="117" width="1.600" height="1.800" fill="#e9ddd0"/><rect x="20" y="93" width="1.600" height="1.800" fill="#e9ddd0"/></g>
<path d="M82 150l100 18v18H128z" fill="#50445c"/>
<rect x="146" y="168" width="30" height="3.500" fill="#e9adc8" filter="url(#b1)"/>
<ellipse cx="137" cy="171" rx="11" ry="8" fill="#aacb3c" opacity=".9" filter="url(#b1)"/>
<ellipse cx="121" cy="180" rx="10" ry="6" fill="#86b04a" opacity=".8" filter="url(#b1)"/>
<rect x="182" y="162" width="24" height="24" fill="#3a3344"/>
<path d="M188 186l9-12h20l8 12z" fill="#8a8eb6"/>
<rect x="196" y="178" width="10" height="8" fill="#c8503c" opacity=".7"/>
<path d="M0 120l44 16 92 50H0z" fill="#4c4a60"/>
<path d="M0 126l40 14 78 46H92L0 140z" fill="#8a8db8" opacity=".7"/>
<path d="M0 136l96 50H0z" fill="#43381f"/>
<path d="M0 146l74 40H0z" fill="url(#roadL)"/>
<path d="M0 164l40 22H22L0 174z" fill="#8c5a1c" opacity=".8"/>
<circle cx="4" cy="141" r="2.800" fill="#3c4428" opacity=".95"/>
<circle cx="14" cy="146" r="2.800" fill="#3c4428" opacity=".95"/>
<circle cx="23" cy="151" r="2.800" fill="#3c4428" opacity=".95"/>
<circle cx="32" cy="156" r="2.800" fill="#3c4428" opacity=".95"/>
<circle cx="42" cy="161" r="2.800" fill="#3c4428" opacity=".95"/>
<circle cx="52" cy="166" r="2.800" fill="#3c4428" opacity=".95"/>
<circle cx="61" cy="171" r="2.800" fill="#3c4428" opacity=".95"/>
<circle cx="70" cy="176" r="2.800" fill="#3c4428" opacity=".95"/>
<circle cx="80" cy="181" r="2.800" fill="#3c4428" opacity=".95"/>
<circle cx="90" cy="186" r="2.800" fill="#3c4428" opacity=".95"/>
<circle cx="10" cy="131" r="2.400" fill="#3a3f34" opacity=".8"/>
<circle cx="21" cy="137" r="2.400" fill="#3a3f34" opacity=".8"/>
<circle cx="32" cy="143" r="2.400" fill="#3a3f34" opacity=".8"/>
<circle cx="43" cy="149" r="2.400" fill="#3a3f34" opacity=".8"/>
<circle cx="54" cy="155" r="2.400" fill="#3a3f34" opacity=".8"/>
<circle cx="65" cy="161" r="2.400" fill="#3a3f34" opacity=".8"/>
<circle cx="76" cy="167" r="2.400" fill="#3a3f34" opacity=".8"/>
<circle cx="87" cy="173" r="2.400" fill="#3a3f34" opacity=".8"/>
<circle cx="50" cy="118" r="2.200" fill="#c4d56e" opacity=".85" filter="url(#b1)"/>
<circle cx="58" cy="124" r="2.200" fill="#c4d56e" opacity=".85" filter="url(#b1)"/>
<circle cx="66" cy="112" r="2.200" fill="#c4d56e" opacity=".85" filter="url(#b1)"/>
<circle cx="72" cy="128" r="2.200" fill="#c4d56e" opacity=".85" filter="url(#b1)"/>
<circle cx="62" cy="134" r="2.200" fill="#c4d56e" opacity=".85" filter="url(#b1)"/>
<circle cx="78" cy="120" r="2.200" fill="#c4d56e" opacity=".85" filter="url(#b1)"/>
<circle cx="54" cy="108" r="2.200" fill="#c4d56e" opacity=".85" filter="url(#b1)"/>
<circle cx="70" cy="140" r="2.200" fill="#c4d56e" opacity=".85" filter="url(#b1)"/>
<rect x="22" y="123" width="20" height="3.500" fill="#d6ecf4" opacity=".85" filter="url(#b1)"/>
<path d="M227 186L345 104 375 96V186z" fill="#3a3220"/>
<path d="M346 104Q360 82 355 58L375 52V104z" fill="#e9a550" filter="url(#b1)"/>
<path d="M236 186L350 106 358 108 262 186z" fill="#e59a34"/>
<path d="M270 186L362 104Q368 84 364 60L375 56V112L300 186z" fill="url(#road)"/>
<path d="M312 186L375 130v12L330 186z" fill="#eda848"/>
<path d="M346 186L375 162v24z" fill="#8a6a38"/>
<path d="M354 100q10-22 6-44l7 0q4 24-6 46z" fill="#fdeec8" opacity=".9" filter="url(#b1)"/>
<circle cx="254" cy="184" r="3.400" fill="#ecc834" opacity=".9" filter="url(#b1)"/>
<circle cx="264" cy="176" r="3.400" fill="#ecc834" opacity=".9" filter="url(#b1)"/>
<circle cx="274" cy="169" r="3.400" fill="#ecc834" opacity=".9" filter="url(#b1)"/>
<circle cx="285" cy="161" r="3.400" fill="#ecc834" opacity=".9" filter="url(#b1)"/>
<circle cx="295" cy="154" r="3.400" fill="#ecc834" opacity=".9" filter="url(#b1)"/>
<circle cx="305" cy="146" r="3.400" fill="#ecc834" opacity=".9" filter="url(#b1)"/>
<circle cx="315" cy="138" r="3.400" fill="#ecc834" opacity=".9" filter="url(#b1)"/>
<circle cx="325" cy="131" r="3.400" fill="#ecc834" opacity=".9" filter="url(#b1)"/>
<circle cx="336" cy="123" r="3.400" fill="#ecc834" opacity=".9" filter="url(#b1)"/>
<circle cx="346" cy="116" r="3.400" fill="#ecc834" opacity=".9" filter="url(#b1)"/>
<circle cx="356" cy="108" r="3.400" fill="#ecc834" opacity=".9" filter="url(#b1)"/>
<circle cx="300" cy="184" r="3" fill="#3e3a20" opacity=".9"/>
<circle cx="309" cy="177" r="3" fill="#3e3a20" opacity=".9"/>
<circle cx="318" cy="170" r="3" fill="#3e3a20" opacity=".9"/>
<circle cx="327" cy="162" r="3" fill="#3e3a20" opacity=".9"/>
<circle cx="336" cy="155" r="3" fill="#3e3a20" opacity=".9"/>
<circle cx="345" cy="148" r="3" fill="#3e3a20" opacity=".9"/>
<circle cx="354" cy="141" r="3" fill="#3e3a20" opacity=".9"/>
<circle cx="363" cy="134" r="3" fill="#3e3a20" opacity=".9"/>
<circle cx="372" cy="126" r="3" fill="#3e3a20" opacity=".9"/>
<circle cx="338" cy="184" r="3" fill="#c8b040" opacity=".8" filter="url(#b1)"/>
<circle cx="347" cy="176" r="3" fill="#c8b040" opacity=".8" filter="url(#b1)"/>
<circle cx="356" cy="168" r="3" fill="#c8b040" opacity=".8" filter="url(#b1)"/>
<circle cx="365" cy="160" r="3" fill="#c8b040" opacity=".8" filter="url(#b1)"/>
<circle cx="374" cy="152" r="3" fill="#c8b040" opacity=".8" filter="url(#b1)"/>
<rect x="356" y="160" width="9" height="5" fill="#e8e4dc" opacity=".8" transform="rotate(-38 360 162)"/>
</g></g></svg>
<!-- PHOTO-END -->
<div id="tab1" class="tab"><svg width="312" height="48" viewBox="0 0 312 48"><defs><linearGradient id="g1" x1="0" x2="1"><stop offset="0" stop-color="#a9c8ec"/><stop offset="1" stop-color="#e6f0fa"/></linearGradient></defs><path d="M0 48L14 0V48z" fill="#b3cfee"/><path d="M299 0L312 48H299z" fill="url(#g1)"/></svg><b>销售信息</b></div>
<div id="sales" class="abs">
 <div class="sub">销售信息</div>
 <table>
  <colgroup><col style="width:201px"><col style="width:112px"><col style="width:200px"><col style="width:112px"><col style="width:200px"><col style="width:112px"><col style="width:200px"><col style="width:113px"></colgroup>
  <tr><td class="l">总套数：</td><td class="v"><span class="d">362</span></td><td class="l">总面积：</td><td class="v"><span class="d">15774.82</span></td><td class="l">住宅套数：</td><td class="v"><span class="d">0</span></td><td class="l l4">住宅面积：</td><td class="v last"><span class="d">0</span></td></tr>
  <tr><td class="l">可售总套数：</td><td class="v"><span class="d">204</span></td><td class="l">可售总面积：</td><td class="v"><span class="d">8770.2</span></td><td class="l">可售住宅套数：</td><td class="v"><span class="d">0</span></td><td class="l l4">可售住宅面积：</td><td class="v last"><span class="d">0</span></td></tr>
  <tr><td class="l">预定总套数：</td><td class="v"><span class="d">0</span></td><td class="l">预定总面积：</td><td class="v"><span class="d">0</span></td><td class="l">预定住宅套数：</td><td class="v"><span class="d">0</span></td><td class="l l4">预定住宅面积：</td><td class="v last"><span class="d">0</span></td></tr>
  <tr><td class="l">已售总套数：</td><td class="v"><span class="d">158</span></td><td class="l">已售总面积：</td><td class="v"><span class="d">7004.62</span></td><td class="l">已售住宅套数：</td><td class="v"><span class="d">0</span></td><td class="l l4">已售住宅面积：</td><td class="v last"><span class="d">0</span></td></tr>
  <tr><td class="l">已登记总套数：</td><td class="v"><span class="d">110</span></td><td class="l">已登记总面积：</td><td class="v"><span class="d">4849.7</span></td><td class="l">已登记住宅套数：</td><td class="v"><span class="d">0</span></td><td class="l l4">已登记住宅面积：</td><td class="v last"><span class="d">0</span></td></tr>
  <tr><td class="l">合同撤销总套数：</td><td class="v"></td><td class="l">定金逾期总次数：</td><td class="v"></td><td class="l"></td><td class="v"></td><td class="l l4"></td><td class="v last"></td></tr>
 </table>
 <div class="frame"></div>
</div>

<div id="tab2" class="tab"><svg width="318" height="48" viewBox="0 0 318 48"><rect x="299" y="0" width="18" height="48" fill="#fdfeff"/><path d="M0 48L14 0V48z" fill="#c4d8f0"/><path d="M299 0L313 48H299z" fill="#c9dcf1"/><path d="M313 48L317 28V48z" fill="#cfe0f3"/><rect x="298.100" y="0" width="1.100" height="48" fill="#7ea6d6"/></svg><b>开盘单元</b></div>
<div id="units" class="abs">
 <table id="t1">
  <colgroup><col style="width:137px"><col style="width:337px"><col style="width:125px"><col style="width:100px"><col style="width:118px"><col style="width:153px"><col style="width:155px"><col style="width:111px"><col style="width:12px"></colgroup>
  <tr><th>编号</th><th>预售许可证/房地产权证</th><th>开盘日期</th><th>总套数</th><th>住宅套数</th><th>总面积</th><th>住宅面积</th><th colspan="2" class="st">销售状态</th></tr>
  <tr><td class="no"><span class="d">024761</span></td><td>沪<span class="d">(2024)</span>虹字不动产权第<span class="d">005820</span>号</td><td><span class="d">2024-06-07</span></td><td><span class="d">362</span></td><td><span class="d">0</span></td><td><span class="d">15774.82</span></td><td><span class="d">0</span></td><td class="g">在售</td><td class="sb"></td></tr>
 </table>
 <div class="ln"></div>
 <div class="r1"><b>销售表</b><span>售楼地址：四平路<span class="d">436</span>弄<span class="d">9</span>号<span class="d">1</span>楼 售楼电话：<span class="d">50292222</span></span></div>
 <div class="r2"><i>沪<span class="d">(2024)</span>虹字不动产权第<span class="d">005820</span>号</i><span><a>房型图</a><a>售楼许可</a><a>合同示范文本</a><a>规划平面图</a><a>保证书</a></span></div>
 <table id="t2">
  <colgroup><col style="width:363px"><col style="width:175px"><col style="width:175px"><col style="width:175px"><col style="width:175px"><col style="width:185px"></colgroup>
  <tr><th class="nm">楼栋名称</th><th>最高报价/最低报价</th><th>报价可浮动幅度</th><th>总套数</th><th>总面积</th><th class="st">销售状态</th></tr>
 </table>
 <table id="t3">
  <colgroup><col style="width:362px"><col style="width:175px"><col style="width:175px"><col style="width:175px"><col style="width:175px"><col style="width:176px"></colgroup>
  <tr><td>四平路<span class="d">436</span>弄<span class="d">1</span>号</td><td><span class="d">950000/490000</span></td><td></td><td><span class="d">362</span></td><td><span class="d">15774.82</span></td><td class="g">在售</td></tr>
 </table>
 <div class="vs"></div>
</div>

</body>
</html>
